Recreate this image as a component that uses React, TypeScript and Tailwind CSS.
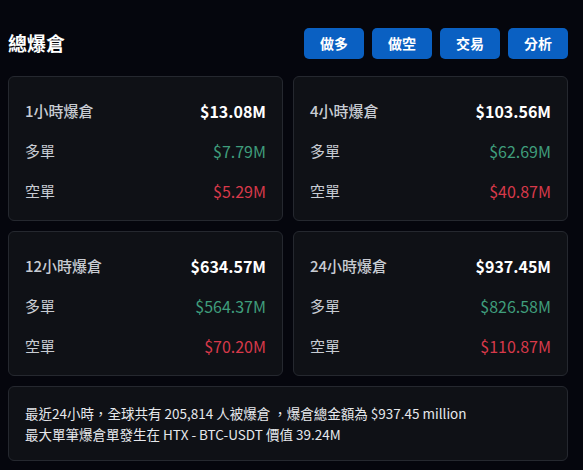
import React from "react";

const font = { fontFamily: '"Noto Sans CJK TC", "Noto Sans", sans-serif' };

type Stat = { period: string; total: string; long: string; short: string };

const stats: Stat[] = [
  { period: "1小時爆倉", total: "$13.08M", long: "$7.79M", short: "$5.29M" },
  { period: "4小時爆倉", total: "$103.56M", long: "$62.69M", short: "$40.87M" },
  { period: "12小時爆倉", total: "$634.57M", long: "$564.37M", short: "$70.20M" },
  { period: "24小時爆倉", total: "$937.45M", long: "$826.58M", short: "$110.87M" },
];

const actions = ["做多", "做空", "交易", "分析"];

function StatCard({ stat }: { stat: Stat }) {
  return (
    <div className="h-[145px] rounded-md border border-[#25282f] bg-[#0f1116] px-4 pt-[14px]">
      <div className="flex h-10 items-center justify-between">
        <span className="text-[15px] font-medium text-[#c8ccd3]">{stat.period}</span>
        <span className="text-[16px] font-semibold text-white">{stat.total}</span>
      </div>
      <div className="flex h-10 items-center justify-between">
        <span className="text-[15px] text-[#c8ccd3]">多單</span>
        <span className="text-[16px] text-[#3f9d7c]">{stat.long}</span>
      </div>
      <div className="flex h-10 items-center justify-between">
        <span className="text-[15px] text-[#c8ccd3]">空單</span>
        <span className="text-[16px] text-[#d7394a]">{stat.short}</span>
      </div>
    </div>
  );
}

export default function App() {
  return (
    <div className="h-[470px] w-[583px] bg-[#05060d] px-2 pt-[28px]" style={font}>
      {/* Header */}
      <div className="flex h-[31px] items-center justify-between">
        <h1 className="text-[19px] font-bold text-white">總爆倉</h1>
        <div className="mr-[7px] flex gap-2">
          {actions.map((a) => (
            <button
              key={a}
              className="h-[31px] w-[60px] rounded-[5px] bg-[#0a60c2] text-[14px] font-bold text-white"
            >
              {a}
            </button>
          ))}
        </div>
      </div>

      {/* Stats */}
      <div className="mt-[17px] mr-[7px] grid grid-cols-2 gap-[10px]">
        {stats.map((s) => (
          <StatCard key={s.period} stat={s} />
        ))}
      </div>

      {/* Summary */}
      <div className="mt-[10px] mr-[7px] flex h-[75px] flex-col justify-center rounded-md border border-[#25282f] bg-[#0f1116] px-4 text-[13.5px] leading-[21px] text-[#e6e8ec]">
        <p>最近24小時，全球共有 205,814 人被爆倉 ，爆倉總金額為 $937.45 million</p>
        <p>最大單筆爆倉單發生在 HTX - BTC-USDT 價值 39.24M</p>
      </div>
    </div>
  );
}
